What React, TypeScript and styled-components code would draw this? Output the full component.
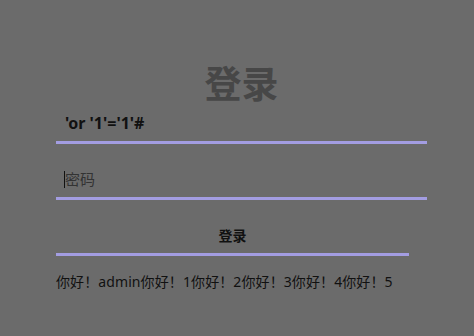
import React from "react"
import styled, { createGlobalStyle } from "styled-components"

const GlobalStyle = createGlobalStyle`
  html, body {
    margin: 0;
    padding: 0;
    background: #6b6b6b;
  }
  * {
    box-sizing: border-box;
  }
`

const Page = styled.div`
  width: 474px;
  height: 336px;
  background: #6b6b6b;
  padding: 64px 47px 0 56px;
  font-family: "Noto Sans", "Noto Sans CJK SC", sans-serif;
  overflow: hidden;
`

const Title = styled.h1`
  margin: 0;
  height: 40px;
  line-height: 40px;
  text-align: center;
  font-size: 37px;
  font-weight: 700;
  color: #474747;
`

const Field = styled.div<{ $gap: number }>`
  margin-top: ${(p) => p.$gap}px;
  height: 38px;
  line-height: 35px;
  border-bottom: 3px solid #a39de2;
  display: flex;
  align-items: center;
`

const FieldValue = styled.span`
  padding-left: 9px;
  font-size: 16px;
  font-weight: 700;
  color: #111;
`

const Placeholder = styled.span`
  padding-left: 8px;
  font-size: 15px;
  color: #333;
  display: flex;
  align-items: center;
`

const Caret = styled.span`
  display: inline-block;
  width: 1px;
  height: 17px;
  background: #111;
`

const Button = styled.div`
  margin-top: 18px;
  width: 353px;
  height: 38px;
  line-height: 35px;
  border-bottom: 3px solid #a39de2;
  text-align: center;
  font-size: 14px;
  font-weight: 700;
  color: #111;
`

const Result = styled.p`
  margin: 16px 0 0;
  line-height: 20px;
  font-size: 14px;
  letter-spacing: 0.1px;
  color: #111;
`

const App = () => {
  const names = ["admin", "1", "2", "3", "4", "5"]
  return (
    <Page>
      <GlobalStyle />
      <Title>登录</Title>
      <Field $gap={2}>
        <FieldValue>'or '1'='1'#</FieldValue>
      </Field>
      <Field $gap={18}>
        <Placeholder>
          <Caret />
          密码
        </Placeholder>
      </Field>
      <Button>登录</Button>
      <Result>{names.map((n) => `你好！${n}`).join("")}</Result>
    </Page>
  )
}

export default App
